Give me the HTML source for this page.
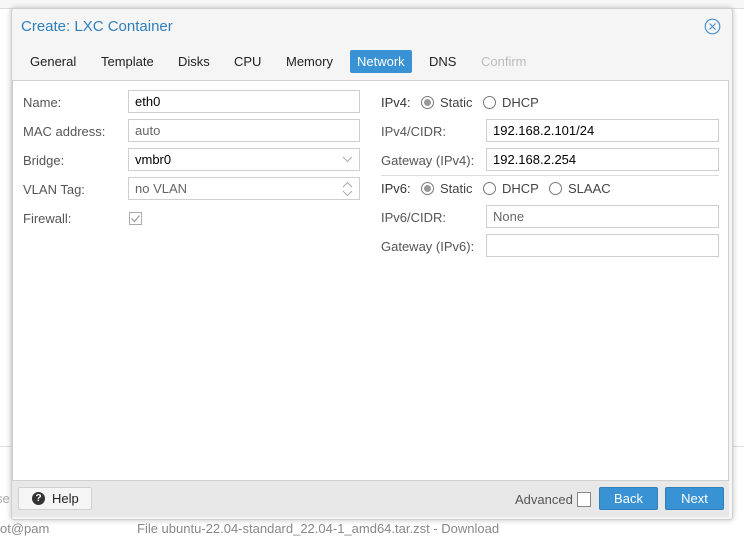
<!DOCTYPE html>
<html><head><style>
body{margin:0;width:744px;height:528px;background:#fff;font-family:"Liberation Sans",sans-serif;font-size:13px;position:relative;overflow:hidden;color:#000}
.a{position:absolute}
.win{left:11px;top:8px;width:720px;height:510px;background:#f5f5f5;border:1px solid #d0d0d0;box-shadow:0 0 6px rgba(0,0,0,.25);border-radius:3px}
.tab{top:54px;font-size:13px;color:#222}
.lbl{color:#555}
.inp{border:1px solid #cfcfcf;background:#fff;line-height:21px;padding-left:6px;box-sizing:border-box;height:23px}
.rad{width:13px;height:13px;border:1px solid #777;border-radius:50%;box-sizing:border-box}
.rad.on::after{content:"";position:absolute;left:2px;top:2px;width:7px;height:7px;border-radius:50%;background:#999}
.btn{height:23px;top:487px;background:#3892d4;border:1px solid #2f7fbd;color:#fff;text-align:center;line-height:22px;border-radius:2px;box-sizing:border-box}
</style></head><body>
<div class="a" style="left:0;top:0;width:744px;height:8px;background:#f7f7f7;border-bottom:1px solid #ddd"></div>
<div class="a" style="left:0;top:446px;width:744px;height:1px;background:#ddd"></div>
<div class="a" style="left:-4px;top:491px;color:#aaa">se</div>
<div class="a" style="left:0;top:521px;color:#888">ot@pam</div>
<div class="a" style="left:137px;top:521px;color:#888">File ubuntu-22.04-standard_22.04-1_amd64.tar.zst - Download</div>
<div class="a win"></div>
<div class="a" style="left:21px;top:18px;font-size:15px;color:#2f7fbd">Create: LXC Container</div>
<svg class="a" style="left:704px;top:18px" width="17" height="17" viewBox="0 0 17 17"><circle cx="8.5" cy="8.5" r="7.3" fill="none" stroke="#4a90d0" stroke-width="1.2"/><path d="M5.5 5.5l6 6M11.5 5.5l-6 6" stroke="#4a90d0" stroke-width="1.2"/></svg>
<div class="a tab" style="left:30px">General</div>
<div class="a tab" style="left:101px">Template</div>
<div class="a tab" style="left:178px">Disks</div>
<div class="a tab" style="left:234px">CPU</div>
<div class="a tab" style="left:286px">Memory</div>
<div class="a" style="left:350px;top:50px;width:62px;height:23px;background:#3892d4;border-radius:2px"></div>
<div class="a tab" style="left:357px;color:#fff">Network</div>
<div class="a tab" style="left:429px">DNS</div>
<div class="a tab" style="left:481px;color:#bbb">Confirm</div>
<div class="a" style="left:12px;top:80px;width:717px;height:401px;background:#fff;border:1px solid #d0d0d0;box-sizing:border-box"></div>
<div class="a lbl" style="left:23px;top:95px">Name:</div>
<div class="a inp" style="left:128px;top:90px;width:232px">eth0</div>
<div class="a lbl" style="left:23px;top:124px">MAC address:</div>
<div class="a inp" style="left:128px;top:119px;width:232px;color:#666">auto</div>
<div class="a lbl" style="left:23px;top:153px">Bridge:</div>
<div class="a inp" style="left:128px;top:148px;width:232px">vmbr0</div>
<svg class="a" style="left:342px;top:155px" width="11" height="8"><path d="M1 2l4.5 4.5L10 2" fill="none" stroke="#aaa"/></svg>
<div class="a lbl" style="left:23px;top:182px">VLAN Tag:</div>
<div class="a inp" style="left:128px;top:177px;width:232px;color:#666">no VLAN</div>
<svg class="a" style="left:342px;top:181px" width="11" height="16"><path d="M1 6l4.5-4.5L10 6M1 10l4.5 4.5L10 10" fill="none" stroke="#aaa"/></svg>
<div class="a lbl" style="left:23px;top:211px">Firewall:</div>
<div class="a" style="left:129px;top:212px;width:13px;height:13px;border:1px solid #aaa;box-sizing:border-box"></div>
<svg class="a" style="left:129px;top:212px" width="13" height="13"><path d="M2.5 6.5l3 3 5-6" fill="none" stroke="#999" stroke-width="1.2"/></svg>
<div class="a" style="left:381px;top:95px;color:#333">IPv4:</div>
<div class="a rad on" style="left:421px;top:96px"></div>
<div class="a" style="left:440px;top:95px;color:#444">Static</div>
<div class="a rad" style="left:483px;top:96px"></div>
<div class="a" style="left:502px;top:95px;color:#444">DHCP</div>
<div class="a lbl" style="left:381px;top:124px">IPv4/CIDR:</div>
<div class="a inp" style="left:486px;top:119px;width:233px">192.168.2.101/24</div>
<div class="a lbl" style="left:381px;top:153px">Gateway (IPv4):</div>
<div class="a inp" style="left:486px;top:148px;width:233px">192.168.2.254</div>
<div class="a" style="left:381px;top:175px;width:338px;height:1px;background:#ddd"></div>
<div class="a" style="left:381px;top:181px;color:#333">IPv6:</div>
<div class="a rad on" style="left:421px;top:182px"></div>
<div class="a" style="left:440px;top:181px;color:#444">Static</div>
<div class="a rad" style="left:483px;top:182px"></div>
<div class="a" style="left:502px;top:181px;color:#444">DHCP</div>
<div class="a rad" style="left:549px;top:182px"></div>
<div class="a" style="left:568px;top:181px;color:#444">SLAAC</div>
<div class="a lbl" style="left:381px;top:210px">IPv6/CIDR:</div>
<div class="a inp" style="left:486px;top:205px;width:233px;color:#666">None</div>
<div class="a lbl" style="left:381px;top:239px">Gateway (IPv6):</div>
<div class="a inp" style="left:486px;top:234px;width:233px"></div>
<div class="a" style="left:12px;top:481px;width:717px;height:36px;background:#e8e8e8"></div>
<div class="a" style="left:18px;top:487px;width:74px;height:23px;background:#f5f5f5;border:1px solid #d0d0d0;box-sizing:border-box;border-radius:2px"></div>
<div class="a" style="left:32px;top:492px;width:13px;height:13px;border-radius:50%;background:#333;color:#fff;font-size:10px;font-weight:bold;text-align:center;line-height:13px">?</div>
<div class="a" style="left:52px;top:491px;color:#222">Help</div>
<div class="a" style="left:515px;top:492px;color:#555">Advanced</div>
<div class="a" style="left:577px;top:492px;width:14px;height:15px;border:1px solid #888;background:#fff;box-sizing:border-box"></div>
<div class="a btn" style="left:599px;width:59px">Back</div>
<div class="a btn" style="left:665px;width:59px">Next</div>
</body></html>
